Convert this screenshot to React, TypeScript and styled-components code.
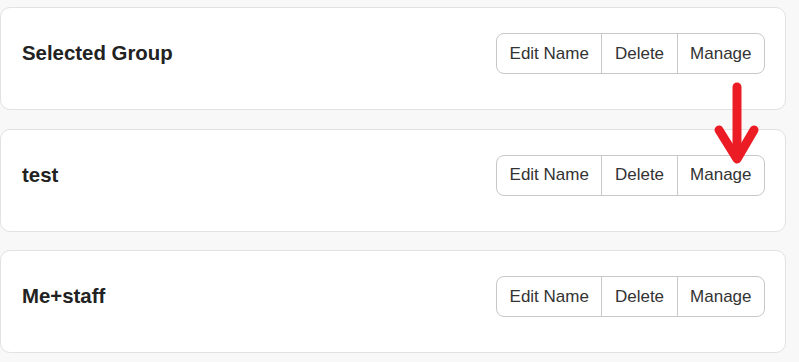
import React from 'react'
import styled, { createGlobalStyle } from 'styled-components'

const GlobalStyle = createGlobalStyle`
  html, body {
    margin: 0;
    padding: 0;
    background: #f8f8f8;
    font-family: "Liberation Sans", Arial, sans-serif;
  }
`

const Page = styled.div`
  position: relative;
  display: flex;
  flex-direction: column;
  gap: 18.5px;
  padding: 7px 13px 0 0;
`

const GroupCard = styled.div`
  box-sizing: border-box;
  height: 103px;
  display: flex;
  align-items: center;
  justify-content: space-between;
  padding: 0 20px 10px 21px;
  background: #ffffff;
  border: 1px solid #e2e2e2;
  border-radius: 10px;
`

const GroupName = styled.h3`
  margin: 0;
  font-size: 20.4px;
  font-weight: 700;
  color: #222222;
`

const ButtonGroup = styled.div`
  display: flex;
  height: 39px;
  border: 1px solid #c8c8c8;
  border-radius: 8px;
  overflow: hidden;
  background: #ffffff;
`

const GroupButton = styled.button`
  font-family: "Liberation Sans", Arial, sans-serif;
  font-size: 17px;
  color: #333333;
  background: transparent;
  border: none;
  padding: 0 12.5px;
  cursor: pointer;
  & + & {
    border-left: 1px solid #c8c8c8;
  }
`

const Arrow = styled.svg`
  position: absolute;
  left: 712px;
  top: 78px;
  pointer-events: none;
`

const groups = ['Selected Group', 'test', 'Me+staff']

export default function App() {
  return (
    <>
      <GlobalStyle />
      <Page>
        {groups.map((name) => (
          <GroupCard key={name}>
            <GroupName>{name}</GroupName>
            <ButtonGroup>
              <GroupButton>Edit Name</GroupButton>
              <GroupButton>Delete</GroupButton>
              <GroupButton>Manage</GroupButton>
            </ButtonGroup>
          </GroupCard>
        ))}
        <Arrow width="50" height="90" viewBox="0 0 50 90">
          <g stroke="#ec1c24" strokeWidth="9" strokeLinecap="round" strokeLinejoin="round" fill="none">
            <line x1="25" y1="9" x2="25" y2="80" />
            <polyline points="7,52 25,81 42,52" />
          </g>
        </Arrow>
      </Page>
    </>
  )
}
